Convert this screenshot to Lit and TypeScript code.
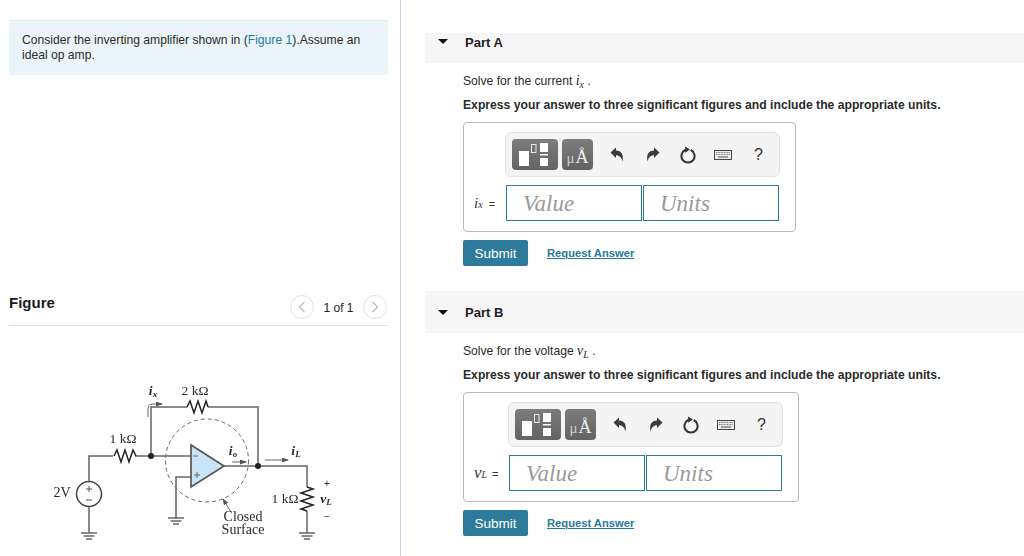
import { LitElement, html, css, svg } from "lit";
import { customElement } from "lit/decorators.js";

const ground = (x: number, y: number) => svg`
  <path d="M${x} ${y}v8M${x - 8} ${y + 8}h16M${x - 5.5} ${y + 11}h11M${x - 3} ${y + 14}h6" class="w"/>`;

const Circuit = () => svg`
<svg class="circuit" width="360" height="186" viewBox="0 370 360 186">
  <defs><marker id="a" markerWidth="7" markerHeight="5" refX="6" refY="2.5" orient="auto"><path d="M0 0L7 2.5L0 5z" fill="#555"/></marker></defs>
  <path class="w" d="M89 481V456H113M135 456H190M151 456V407H187M208 407H258V466M224 466H307V487M307 511V525M191 477H176V510M89 507V525"/>
  <path class="r" d="M114 456l3-6 4 12 4-12 4 12 4-12 3 6M187 407l3-6 4 12 4-12 4 12 4-12 2 6"/>
  <path class="r" d="M307 487l6 2-12 4 12 4-12 4 12 4-12 4 6 2"/>
  <circle cx="89" cy="494" r="12.5" fill="#fff" stroke="#444" stroke-width="1.5"/>
  <path d="M89 486v6M86 489h6M86 500h6" stroke="#555" fill="none"/>
  <circle class="dash" cx="207" cy="460.5" r="41.5"/>
  <path d="M191 445L224 466L191 487Z" fill="#c9e4f7" stroke="#555" stroke-width="1.7"/>
  <path d="M193 456h5M194 475h6M197 472v6" stroke="#666" fill="none"/>
  <circle cx="151" cy="456" r="3" fill="#222"/><circle cx="258" cy="466" r="3" fill="#222"/>
  ${ground(89, 525)}${ground(176, 510)}${ground(307, 525)}
  <path class="t" d="M148 417V409Q148 404 153 404H162" marker-end="url(#a)"/>
  <path class="t" d="M232 462H246" marker-end="url(#a)"/>
  <path class="t" d="M265 460H288" marker-end="url(#a)"/>
  <path class="t" d="M231 512L223 499" marker-end="url(#a)"/>
  <text x="123" y="443" text-anchor="middle">1 kΩ</text>
  <text x="195" y="395" text-anchor="middle">2 kΩ</text>
  <text x="62" y="497" text-anchor="middle" class="big">2V</text>
  <text x="285" y="503" text-anchor="middle">1 kΩ</text>
  <text x="243" y="521" text-anchor="middle" class="big">Closed</text>
  <text x="243" y="534" text-anchor="middle" class="big">Surface</text>
  <text x="153" y="395" text-anchor="middle" class="i">i<tspan class="s" dy="2">x</tspan></text>
  <text x="233" y="455" text-anchor="middle" class="i">i<tspan class="s" dy="2">o</tspan></text>
  <text x="296" y="455" text-anchor="middle" class="i">i<tspan class="s" dy="2">L</tspan></text>
  <text x="326" y="503" text-anchor="middle" class="i">v<tspan class="s" dy="2">L</tspan></text>
  <text x="327" y="487" text-anchor="middle" class="p">+</text>
  <text x="327" y="520" text-anchor="middle" class="p">−</text>
</svg>`;

const UndoIcon = (flip: boolean) => html`<svg class=${flip ? "flip" : ""} width="14" height="15" viewBox="0 0 14 15">
  <path d="M0.5 5.5L6 0.5V3.4C10.5 3.4 14 6.5 12.5 14.5C11.6 10.5 9.5 8.2 6 8.2V11Z" fill="#3c3c3c"/></svg>`;

const Toolbar = () => html`
  <div class="toolbar">
    <div class="tbtn tpl">
      <svg width="29" height="23" viewBox="0 0 29 23">
        <rect x="0" y="8" width="10" height="15" fill="#fff"/>
        <rect x="12.5" y="1.5" width="4.5" height="8" fill="none" stroke="#e8e8e8"/>
        <rect x="21" y="0" width="8" height="9" fill="#fff"/>
        <rect x="21" y="11" width="8" height="1.5" fill="#fff"/>
        <rect x="21" y="15" width="8" height="8" fill="#fff"/>
      </svg>
    </div>
    <div class="tbtn unit"><span class="mu">μ</span><span class="ang">Å</span></div>
    <span class="ic first">${UndoIcon(false)}</span>
    <span class="ic second">${UndoIcon(true)}</span>
    <span class="ic third"><svg width="16" height="18" viewBox="0 0 16 18">
      <path d="M5.3 4A6.6 6.6 0 1 0 10.7 4" fill="none" stroke="#333" stroke-width="2"/>
      <path d="M5 0.5L10 3.4 5.2 6.8Z" fill="#333"/></svg></span>
    <span class="ic fourth"><svg width="18" height="10" viewBox="0 0 18 10">
      <rect x=".5" y=".5" width="17" height="9" fill="#eee" stroke="#444"/>
      <path d="M2 2.5h14M2 4.5h14" stroke="#777" stroke-dasharray="1 .6"/><path d="M4 7h10" stroke="#666" stroke-width="1.2"/></svg></span>
    <span class="help">?</span>
  </div>`;

const Part = (name: string, question: unknown, label: unknown, cls: string) => html`
  <section class="part ${cls}">
    <header class="phead"><span class="tri"></span><span>${name}</span></header>
    <div class="pbody">
      <p class="q">${question}</p>
      <p class="instr">Express your answer to three significant figures and include the appropriate units.</p>
      <div class="answer">
        <div class="tbrow">${Toolbar()}</div>
        <div class="fields">
          <span class="lbl">${label}<span class="eq">=</span></span>
          <div class="inp">Value</div>
          <div class="inp">Units</div>
        </div>
      </div>
      <div class="actions">
        <button class="submit">Submit</button>
        <a class="req">Request Answer</a>
      </div>
    </div>
  </section>`;

@customElement("app-root")
export class AppRoot extends LitElement {
  static styles = css`
    :host { display: block; width: 1024px; height: 556px; overflow: hidden; background: #fff;
      font-family: "Liberation Sans", Arial, sans-serif; color: #222; }
    .page { display: grid; grid-template-columns: 401px 1fr; height: 556px; }
    .left { border-right: 1px solid #c3d2e6; padding: 20px 12px 0 9px; }
    .statement { height: 55px; box-sizing: border-box; background: #e9f5f8; border-top: 1px solid #e2e8ea;
      padding: 12px 13px; font-size: 12.14px; line-height: 15px; color: #2b2b2b; }
    .statement a { color: #26799c; }
    .fighead { display: flex; align-items: flex-start; justify-content: space-between; margin-top: 219px; height: 32px;
      box-sizing: border-box; border-bottom: 1px solid #dfdfdf; }
    .fighead h2 { margin: 0; font-size: 15px; line-height: 18px; font-weight: 700; color: #1a1a1a; }
    .pager { display: flex; align-items: center; gap: 9.5px; font-size: 12px; margin: 1px 1px 0 0; height: 24px; }
    .pager span:nth-child(2) { padding-top: 2px; }
    .pg { width: 24px; height: 24px; border: 1px solid #e2e2e2; border-radius: 50%; box-sizing: border-box;
      display: flex; align-items: center; justify-content: center; }
    .circuit { display: block; margin: 44px 0 0 -9px; filter: blur(0.45px); }
    .circuit .w { stroke: #666; stroke-width: 1.5; fill: none; }
    .circuit .r { stroke: #222; stroke-width: 1.5; fill: none; }
    .circuit .dash { stroke: #666; stroke-dasharray: 4 3; fill: none; }
    .circuit .t { stroke: #666; fill: none; }
    .circuit text { font-family: "Liberation Serif", serif; font-size: 13.5px; fill: #2a2a2a; }
    .circuit .big { font-size: 14px; }
    .circuit .i { font-style: italic; font-size: 13.5px; font-weight: 700; }
    .circuit .s { font-size: 9px; }
    .circuit .p { font-family: "Liberation Sans", sans-serif; font-size: 10px; }

    .right { padding: 33px 0 0 24px; }
    .part { display: block; }
    .part.b { margin-top: 25px; }
    .phead { height: 42px; box-sizing: border-box; background: #f6f6f6; display: flex; align-items: center;
      font-size: 13px; line-height: 14px; font-weight: 700; gap: 17px; padding-left: 13px; color: #222; }
    .part.a .phead { height: 30px; align-items: flex-start; padding-top: 3px; }
    .part.b .phead span:last-child { padding-top: 1px; }
    .part.a .tri { margin-top: 3px; }
    .tri { width: 0; height: 0; border-left: 5px solid transparent; border-right: 5px solid transparent; border-top: 5px solid #111; }
    .pbody { padding-left: 38px; }
    .q { margin: 0; padding-top: 10px; height: 15px; line-height: 15px; font-size: 12.15px; color: #2b2b2b; }
    .q i { font-family: "Liberation Serif", serif; font-size: 14px; }
    .q sub { font-size: 10px; font-style: italic; font-family: "Liberation Serif", serif; line-height: 0; }
    .instr { margin: 10px 0 0; line-height: 15px; font-size: 12.18px; font-weight: 700; color: #2b2b2b; }
    .answer { width: 333px; height: 110px; box-sizing: border-box; border: 1px solid #b9b9b9; border-radius: 4px; margin-top: 9px; padding-top: 9px; }
    .part.b .answer { width: 336px; }
    .tbrow { padding-left: 41px; }
    .part.b .tbrow { padding-left: 44px; }
    .toolbar { width: 275px; height: 45px; box-sizing: border-box; background: #f4f4f4; border: 1px solid #e2e2e2; border-radius: 6px;
      display: flex; align-items: center; padding-left: 6px; }
    .tbtn { height: 31px; border-radius: 4px; background: linear-gradient(#7c7c7c, #636363); display: flex; align-items: center; justify-content: center; color: #fff; }
    .tpl { width: 46px; }
    .tpl svg { margin-right: 4px; }
    .unit { width: 31px; margin-left: 4px; font-family: "Liberation Serif", serif; align-items: flex-end; padding-bottom: 4px; height: 27px; box-sizing: content-box; }
    .mu { font-size: 15px; line-height: 16px; color: #d0d0d0; }
    .ang { font-size: 18px; line-height: 18px; color: #eee; margin-left: 1px; }
    .ic { display: flex; align-items: center; justify-content: center; }
    .flip { transform: scaleX(-1); }
    .first { margin-left: 17px; }
    .second { margin-left: 22px; }
    .third { margin-left: 20px; }
    .fourth { margin-left: 18px; }
    .help { margin-left: 22px; font-size: 16px; color: #333; }
    .fields { display: flex; align-items: center; margin-top: 8px; height: 36px; gap: 1px; }
    .lbl { width: 41px; box-sizing: border-box; padding-left: 10px; font-size: 15px; font-family: "Liberation Serif", serif; color: #333; white-space: nowrap; display: flex; align-items: baseline; }
    .lbl sub { font-size: 10px; line-height: 0; font-style: italic; }
    .eq { font-family: "Liberation Sans", sans-serif; font-size: 11px; margin-left: 6px; }
    .part.b .lbl { width: 44px; }
    .part.b .lbl i { font-size: 17px; }
    .part.b .eq { margin-left: 5px; }
    .inp { width: 136px; height: 36px; box-sizing: border-box; border: 1px solid #2b7d9e; background: #fff;
      font-family: "Liberation Serif", serif; font-style: italic; font-size: 23px; color: #9a9a9a; padding: 3px 0 0 16px; line-height: 30px; }
    .actions { display: flex; align-items: center; gap: 19px; margin-top: 8px; }
    .submit { width: 65px; height: 26px; border: 0; border-radius: 2px; background: #2e7a9b; color: #fff; font: 13.5px "Liberation Sans", sans-serif; padding: 0; }
    .req { font-size: 11.2px; font-weight: 700; color: #26799c; text-decoration: underline; }
  `;

  render() {
    return html`<div class="page">
      <div class="left">
        <div class="statement">Consider the inverting amplifier shown in (<a>Figure 1</a>).Assume an ideal op amp.</div>
        <div class="fighead">
          <h2>Figure</h2>
          <div class="pager">
            <span class="pg"><svg width="8" height="12" viewBox="0 0 8 12"><path d="M6.5 1L1.5 6l5 5" fill="none" stroke="#bbb" stroke-width="1.2"/></svg></span>
            <span>1 of 1</span>
            <span class="pg"><svg width="8" height="12" viewBox="0 0 8 12"><path d="M1.5 1l5 5-5 5" fill="none" stroke="#bbb" stroke-width="1.2"/></svg></span>
          </div>
        </div>
        ${Circuit()}
      </div>
      <div class="right">
        ${Part("Part A", html`Solve for the current <i>i</i><sub>x</sub> .`, html`<i>i</i><sub>x</sub>`, "a")}
        ${Part("Part B", html`Solve for the voltage <i>v</i><sub>L</sub> .`, html`<i>v</i><sub>L</sub>`, "b")}
      </div>
    </div>`;
  }
}
